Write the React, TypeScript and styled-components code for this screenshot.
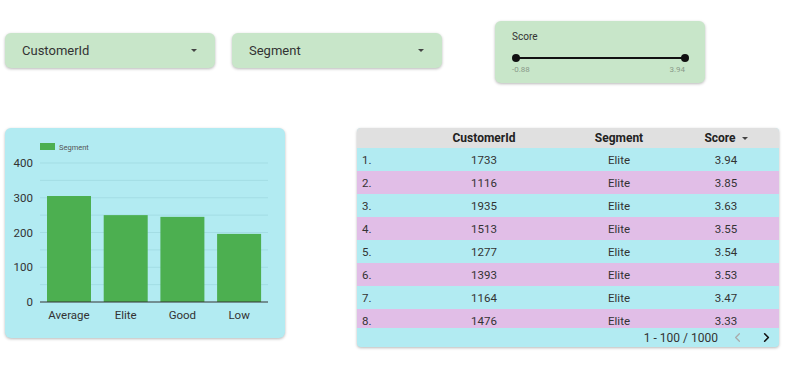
import React from "react";
import styled, { createGlobalStyle } from "styled-components";
import { ChevronLeft, ChevronRight } from "lucide-react";

const GlobalStyle = createGlobalStyle`
  body {
    margin: 0;
    background: #ffffff;
    font-family: Roboto, "Liberation Sans", sans-serif;
    color: #333;
  }
`;

const Page = styled.div`
  width: 800px;
  height: 379px;
  padding: 21px 5px 0;
  box-sizing: border-box;
  overflow: hidden;
`;

const TopRow = styled.div`
  display: flex;
  align-items: flex-start;
`;

const Dropdown = styled.div<{ $gap: number }>`
  display: flex;
  align-items: center;
  justify-content: space-between;
  width: 210px;
  height: 35px;
  margin-top: 12px;
  margin-right: ${(p) => p.$gap}px;
  padding: 0 18px 0 17px;
  box-sizing: border-box;
  background: #c8e6c9;
  border-radius: 6px;
  box-shadow: 0 1px 3px rgba(0, 0, 0, 0.28);
  font-size: 13px;
  color: #333;
`;

const Caret = styled.span`
  width: 0;
  height: 0;
  border-left: 3px solid transparent;
  border-right: 3px solid transparent;
  border-top: 3px solid #444;
`;

const SliderCard = styled.div`
  width: 210px;
  height: 62px;
  padding: 10px 17px 0;
  box-sizing: border-box;
  background: #c8e6c9;
  border-radius: 6px;
  box-shadow: 0 1px 3px rgba(0, 0, 0, 0.28);
`;

const SliderTitle = styled.div`
  font-size: 10px;
  color: #333;
  height: 12px;
  line-height: 12px;
`;

const Track = styled.div`
  position: relative;
  margin: 14px 3px 0 4px;
  height: 2px;
  background: #111;
`;

const Thumb = styled.span<{ $side: "left" | "right" }>`
  position: absolute;
  top: -3px;
  ${(p) => p.$side}: -4px;
  width: 8px;
  height: 8px;
  border-radius: 50%;
  background: #111;
`;

const SliderLabels = styled.div`
  display: flex;
  justify-content: space-between;
  margin-top: 6px;
  padding-right: 3px;
  font-size: 8px;
  color: #8a9a8a;
`;

const BottomRow = styled.div`
  display: flex;
  align-items: flex-start;
  margin-top: 45px;
  gap: 72px;
`;

const ChartCard = styled.div`
  width: 280px;
  height: 210px;
  background: #b2ebf2;
  border-radius: 6px;
  box-shadow: 0 1px 3px rgba(0, 0, 0, 0.28);
`;

const TableCard = styled.div`
  width: 422px;
  border-radius: 4px;
  overflow: hidden;
  box-shadow: 0 1px 3px rgba(0, 0, 0, 0.28);
  background: #b2ebf2;
`;

const cols = "60px 134px 136px 78px 14px";

const HeaderRow = styled.div`
  display: grid;
  grid-template-columns: ${cols};
  height: 20px;
  align-items: center;
  background: #e0e0e0;
  font-size: 12px;
  font-weight: 700;
  color: #222;
`;

const HeadCell = styled.div`
  display: flex;
  justify-content: center;
  align-items: center;
  gap: 6px;
`;

const Body = styled.div`
  height: 180px;
  overflow: hidden;
`;

const Row = styled.div<{ $odd: boolean }>`
  display: grid;
  grid-template-columns: ${cols};
  height: 23px;
  align-items: center;
  background: ${(p) => (p.$odd ? "#b2ebf2" : "#e1bee7")};
  font-size: 11.5px;
  color: #333;
`;

const IndexCell = styled.div`
  padding-left: 5px;
`;

const Cell = styled.div`
  text-align: center;
`;

const Footer = styled.div`
  display: flex;
  justify-content: flex-end;
  align-items: center;
  height: 19px;
  padding-right: 5px;
  font-size: 12px;
  color: #333;
`;

const Pager = styled.span<{ $active: boolean }>`
  display: flex;
  margin-left: ${(p) => (p.$active ? 14 : 12)}px;
  color: ${(p) => (p.$active ? "#111" : "#aaa")};
`;

const bars = [
  { label: "Average", value: 305 },
  { label: "Elite", value: 250 },
  { label: "Good", value: 245 },
  { label: "Low", value: 196 },
];

const rows = [
  ["1733", "3.94"],
  ["1116", "3.85"],
  ["1935", "3.63"],
  ["1513", "3.55"],
  ["1277", "3.54"],
  ["1393", "3.53"],
  ["1164", "3.47"],
  ["1476", "3.33"],
];

const base = 174;
const scale = 139 / 400;

function BarChart() {
  return (
    <svg width="280" height="210" viewBox="0 0 280 210">
      <rect x="35" y="15" width="15" height="7" fill="#4caf50" />
      <text x="54" y="22" fontSize="7.5" fill="#555" fontFamily="Roboto, sans-serif">
        Segment
      </text>
      {[50, 100, 150, 200, 250, 300, 350, 400].map((v) => (
        <line
          key={v}
          x1="35"
          x2="263"
          y1={base - v * scale}
          y2={base - v * scale}
          stroke="#a3dde4"
          strokeWidth="1"
        />
      ))}
      {[0, 100, 200, 300, 400].map((v) => (
        <text
          key={v}
          x="28"
          y={base - v * scale + 4}
          textAnchor="end"
          fontSize="11.5"
          fill="#333"
          fontFamily="Roboto, sans-serif"
        >
          {v}
        </text>
      ))}
      {bars.map((b, i) => {
        const x = 42 + i * 56.7;
        const h = b.value * scale;
        return (
          <g key={b.label}>
            <rect x={x} y={base - h} width="44" height={h} fill="#4caf50" />
            <text
              x={x + 22}
              y="191"
              textAnchor="middle"
              fontSize="11.5"
              fill="#333"
              fontFamily="Roboto, sans-serif"
            >
              {b.label}
            </text>
          </g>
        );
      })}
      <line x1="35" x2="263" y1={base} y2={base} stroke="#333" strokeWidth="1" />
    </svg>
  );
}

export default function App() {
  return (
    <>
      <GlobalStyle />
      <Page>
        <TopRow>
          <Dropdown $gap={17}>
            CustomerId
            <Caret />
          </Dropdown>
          <Dropdown $gap={53}>
            Segment
            <Caret />
          </Dropdown>
          <SliderCard>
            <SliderTitle>Score</SliderTitle>
            <Track>
              <Thumb $side="left" />
              <Thumb $side="right" />
            </Track>
            <SliderLabels>
              <span>-0.88</span>
              <span>3.94</span>
            </SliderLabels>
          </SliderCard>
        </TopRow>
        <BottomRow>
          <ChartCard>
            <BarChart />
          </ChartCard>
          <TableCard>
            <HeaderRow>
              <div />
              <HeadCell>CustomerId</HeadCell>
              <HeadCell>Segment</HeadCell>
              <HeadCell>
                Score
                <Caret />
              </HeadCell>
              <div />
            </HeaderRow>
            <Body>
              {rows.map(([id, score], i) => (
                <Row key={id} $odd={i % 2 === 0}>
                  <IndexCell>{i + 1}.</IndexCell>
                  <Cell>{id}</Cell>
                  <Cell>Elite</Cell>
                  <Cell>{score}</Cell>
                  <div />
                </Row>
              ))}
            </Body>
            <Footer>
              1 - 100 / 1000
              <Pager $active={false}>
                <ChevronLeft size={15} strokeWidth={2} />
              </Pager>
              <Pager $active={true}>
                <ChevronRight size={15} strokeWidth={2.6} />
              </Pager>
            </Footer>
          </TableCard>
        </BottomRow>
      </Page>
    </>
  );
}
